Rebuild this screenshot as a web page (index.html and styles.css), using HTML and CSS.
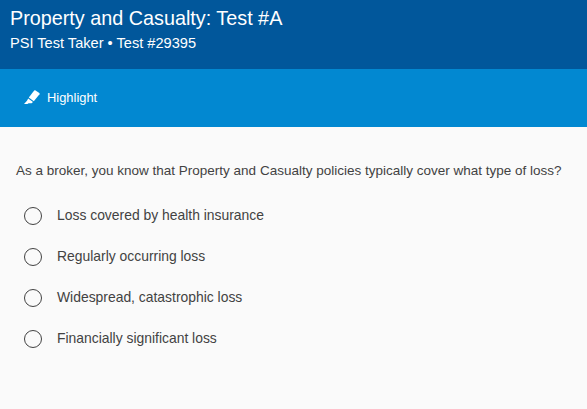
FILE: index.html
```html
<!DOCTYPE html>
<html lang="en">
<head>
<meta charset="utf-8">
<title>Property and Casualty: Test #A</title>
<link rel="stylesheet" href="styles.css">
</head>
<body>
<header class="header">
  <h1 class="title">Property and Casualty: Test #A</h1>
  <p class="subtitle">PSI Test Taker • Test #29395</p>
</header>
<nav class="toolbar">
  <button class="tool" type="button">
    <svg class="tool-icon" viewBox="0 0 16 14" width="16" height="14" aria-hidden="true">
      <path d="M11.2 0.3 L15.3 3.1 Q15.9 3.6 15.5 4.3 L9.8 11.2 L4.8 7.6 L10.2 0.6 Q10.7 0 11.2 0.3 Z" fill="#fff"/>
      <path d="M4.2 8.4 L9 12 L7.6 13.2 L4.6 13.2 L3.4 14 L0 14 L3 10.8 Z" fill="#fff"/>
    </svg>
    <span>Highlight</span>
  </button>
</nav>
<main class="content">
  <p class="question">As a broker, you know that Property and Casualty policies typically cover what type of loss?</p>
  <ul class="options">
    <li class="option"><span class="radio"></span>Loss covered by health insurance</li>
    <li class="option"><span class="radio"></span>Regularly occurring loss</li>
    <li class="option"><span class="radio"></span>Widespread, catastrophic loss</li>
    <li class="option"><span class="radio"></span>Financially significant loss</li>
  </ul>
</main>
</body>
</html>
```
FILE: styles.css
```css
* { box-sizing: border-box; }
html, body { margin: 0; height: 100%; overflow: hidden; }
body {
  background: #fafafa;
  font-family: "Liberation Sans", Arial, sans-serif;
  color: #424242;
}
.header {
  height: 69px;
  background: #01579b;
  color: #fff;
  padding: 6px 10px 0;
}
.title {
  margin: 0;
  font-size: 19.8px;
  font-weight: 400;
  line-height: 24px;
}
.subtitle {
  margin: 4px 0 0;
  font-size: 14.6px;
  line-height: 18px;
}
.toolbar {
  height: 58px;
  background: #0288d1;
  display: flex;
  align-items: center;
  padding: 0 0 2px 24px;
}
.tool {
  display: flex;
  align-items: center;
  gap: 7px;
  padding: 0;
  border: 0;
  background: none;
  color: #fff;
  font: 12.9px "Liberation Sans", Arial, sans-serif;
}
.tool-icon { display: block; }
.content { padding: 36px 16px 0; }
.question {
  margin: 0;
  font-size: 13.5px;
  line-height: 16px;
}
.options {
  list-style: none;
  margin: 15px 0 0;
  padding: 0 0 0 8px;
}
.option {
  display: flex;
  align-items: center;
  gap: 15px;
  height: 41px;
  font-size: 13.9px;
}
.radio {
  width: 18px;
  height: 18px;
  border: 1.3px solid #424242;
  border-radius: 50%;
  margin-top: 2px;
}
```
